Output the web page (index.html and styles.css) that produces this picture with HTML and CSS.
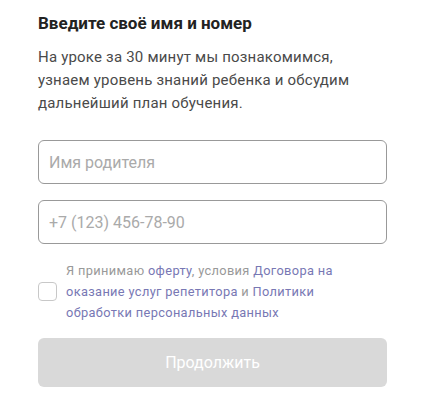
FILE: index.html
```html
<!DOCTYPE html>
<html lang="ru">
<head>
	<meta charset="UTF-8">
	<meta name="viewport" content="width=device-width, initial-scale=1">
	<title>Запись на урок</title>
	<link rel="stylesheet" href="styles.css">
</head>
<body>
	<form class="lead" name="lead">
		<h2 class="lead__title">Введите своё имя и номер</h2>
		<p class="lead__text">На уроке за 30 минут мы познакомимся, узнаем уровень знаний ребенка и обсудим дальнейший план обучения.</p>

		<input class="lead__input" type="text" name="name" placeholder="Имя родителя">
		<input class="lead__input" type="tel" name="phone" placeholder="+7 (123) 456-78-90">

		<label class="lead__agree">
			<input class="lead__check" type="checkbox" name="agree">
			<span class="lead__box"></span>
			<span class="lead__agree-text">Я принимаю <a href="#">оферту</a>, условия <a href="#">Договора на оказание услуг репетитора</a> и <a href="#">Политики обработки персональных данных</a></span>
		</label>

		<button class="lead__submit" type="submit" disabled>Продолжить</button>
	</form>
</body>
</html>
```

FILE: styles.css
```css
body {
	margin: 0;
	background: #fff;
	font-family: Roboto, "Liberation Sans", sans-serif;
}

.lead {
	width: 349px;
	padding: 11px 0 0 38px;
}

.lead__title {
	margin: 0;
	font-size: 17px;
	line-height: 24px;
	font-weight: 700;
	color: #222;
}

.lead__text {
	max-width: 330px;
	margin: 11px 0 0;
	font-size: 15px;
	line-height: 23px;
	letter-spacing: 0.2px;
	color: #4a4a4a;
}

.lead__input {
	display: block;
	box-sizing: border-box;
	width: 100%;
	height: 44px;
	margin-top: 16px;
	padding: 0 10px;
	border: 1px solid #999;
	border-radius: 6px;
	font-family: inherit;
	font-size: 16px;
	color: #222;
	outline: none;
}
.lead__input:first-of-type { margin-top: 25px; }
.lead__input::placeholder { color: #aaa; }

.lead__agree {
	display: flex;
	align-items: center;
	gap: 9px;
	margin-top: 16px;
	cursor: pointer;
}
.lead__check { display: none; }
.lead__box {
	flex: none;
	box-sizing: border-box;
	width: 19px;
	height: 19px;
	border: 1px solid #c8c8c8;
	border-radius: 4px;
}
.lead__agree-text {
	max-width: 285px;
	font-size: 12.8px;
	line-height: 21px;
	letter-spacing: 0.35px;
	color: #999;
}
.lead__agree-text a {
	color: #7878b4;
	text-decoration: none;
}

.lead__submit {
	display: block;
	width: 100%;
	height: 49px;
	margin-top: 15px;
	border: none;
	border-radius: 6px;
	background: #d9d9d9;
	color: #fff;
	font-family: inherit;
	font-size: 16px;
}
```
